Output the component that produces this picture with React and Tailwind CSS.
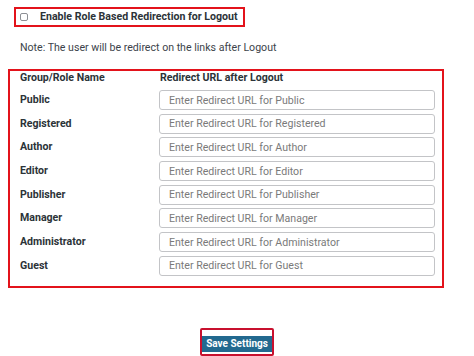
const roles = [
  "Public",
  "Registered",
  "Author",
  "Editor",
  "Publisher",
  "Manager",
  "Administrator",
  "Guest",
];

export default function App() {
  return (
    <div className="w-[474px] h-[356px] bg-white text-[#3c434a] font-['Roboto',sans-serif] relative">
      <div className="pt-[7px] pl-[14px]">
        <div className="w-[231px] h-[20px] border-2 border-[#e3131b] flex items-center pl-[4px]">
          <span className="w-[8px] h-[8px] border border-[#8c8f94] rounded-[2px] bg-white"></span>
          <span className="ml-[12px] text-[10.6px] font-bold text-[#2c3338] leading-none whitespace-nowrap">
            Enable Role Based Redirection for Logout
          </span>
        </div>
      </div>
      <p className="mt-[14px] pl-[20px] text-[10.6px] leading-[14px] text-[#3c434a]">
        Note: The user will be redirect on the links after Logout
      </p>
      <div className="mt-[14px] ml-[8px] w-[436px] h-[219px] border-2 border-[#e3131b] pl-[10px]">
        <div className="flex h-[14px] items-center text-[10.6px] font-bold text-[#2c3338]">
          <div className="w-[140px]">Group/Role Name</div>
          <div>Redirect URL after Logout</div>
        </div>
        <div className="mt-[5px] flex flex-col gap-[3.7px]">
          {roles.map((r) => (
            <div key={r} className="flex items-center h-[20px]">
              <div className="w-[139px] text-[10.6px] font-bold text-[#2c3338]">{r}</div>
              <input
                className="w-[276px] h-[20px] border border-[#c3c4c7] rounded-[3px] px-[9px] text-[10.6px] placeholder:text-[#7a7a7a] outline-none"
                placeholder={`Enter Redirect URL for ${r}`}
              />
            </div>
          ))}
        </div>
      </div>
      <div className="mt-[40px] flex justify-center">
        <div className="border-2 border-[#c8102e] rounded-[2px]">
          <button className="w-[70px] h-[16px] bg-[#22698f] text-white text-[10px] font-bold leading-none">
            Save Settings
          </button>
        </div>
      </div>
    </div>
  );
}
